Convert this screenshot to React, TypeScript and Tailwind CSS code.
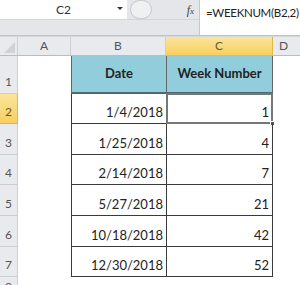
import React from 'react';

const rows = [
  { n: 2, date: '1/4/2018', week: 1, h: 'h-[30px]' },
  { n: 3, date: '1/25/2018', week: 4, h: 'h-[31px]' },
  { n: 4, date: '2/14/2018', week: 7, h: 'h-[30px]' },
  { n: 5, date: '5/27/2018', week: 21, h: 'h-[31px]' },
  { n: 6, date: '10/18/2018', week: 42, h: 'h-[31px]' },
  { n: 7, date: '12/30/2018', week: 52, h: 'h-[30px]' },
];

const font = { fontFamily: 'Lato, "Open Sans", sans-serif' };

const App: React.FC = () => {
  return (
    <div className="w-[300px] h-[285px] overflow-hidden bg-white text-[#222]" style={font}>
      {/* formula bar */}
      <div className="flex h-[35px] bg-[#e4e6e9]">
        <div className="flex flex-col w-[199px] shrink-0">
          <div className="flex h-[19px] items-center">
            <div className="relative w-[127px] h-[19px] bg-white flex items-center justify-center text-[12px] text-[#333]">
              C2
              <span className="absolute right-[4px] top-[7px] w-0 h-0 border-l-[3px] border-r-[3px] border-t-[3px] border-l-transparent border-r-transparent border-t-[#333]" />
            </div>
            <div className="ml-[3px] w-[22px] h-[19px] rounded-full border border-[#c4c8cd] bg-[#eef0f2]" />
            <div className="flex-1 flex justify-end pr-[5px]">
              <span className="italic text-[12px] text-[#444]" style={{ fontFamily: '"Liberation Serif", serif' }}>
                f<span className="text-[9px]">x</span>
              </span>
            </div>
          </div>
          <div className="flex-1 border-t border-[#d2d5d9]" />
        </div>
        <div className="flex-1 min-w-0 whitespace-nowrap bg-white border-l border-[#c4c8cd] pl-[6px] pt-[4px] text-[11.5px] tracking-[-0.3px] text-[#222]">
          =WEEKNUM(B2,2)
        </div>
      </div>
      <div className="h-[2px] bg-[#d4d7db] border-t border-[#c0c4c9]" />

      {/* column headers */}
      <div className="flex h-[19px] bg-[#e8eaed] border-b border-[#b7bcc2] text-[12px] text-[#555]">
        <div className="relative w-[18px] border-r border-[#cbcfd4]">
          <span className="absolute right-[2px] bottom-[2px] w-0 h-0" style={{ borderBottom: '11px solid #cfd2d6', borderLeft: '11px solid transparent' }} />
        </div>
        <div className="w-[53px] flex items-center justify-center border-r border-[#cbcfd4]">A</div>
        <div className="w-[95px] flex items-center justify-center border-r border-[#cbcfd4]">B</div>
        <div className="w-[107px] flex items-center justify-center border-r border-[#e0b848] bg-gradient-to-b from-[#fbe59a] to-[#f6cf5e] text-[#6b5a2a]">C</div>
        <div className="flex-1 flex items-center pl-[6px]">D</div>
      </div>

      {/* row 1 */}
      <div className="flex h-[38px]">
        <div className="w-[18px] bg-[#e8eaed] border-r border-b border-[#cbcfd4] flex items-end justify-center pb-[2px] text-[12px] text-[#555]">1</div>
        <div className="w-[53px]" />
        <div className="w-[95px] bg-[#92cddc] border-l border-[#666] border-b-2 border-b-[#4b6a71] flex items-center justify-center font-bold text-[13px]">Date</div>
        <div className="w-[107px] bg-[#92cddc] border-l border-r border-[#666] border-b-2 border-b-[#4b6a71] flex items-center justify-center font-bold text-[13px]">Week Number</div>
        <div className="flex-1" />
      </div>

      {rows.map((r) => (
        <div key={r.n} className={`flex ${r.h}`}>
          <div
            className={`w-[18px] border-r border-b flex items-end justify-center pb-[2px] text-[12px] ${
              r.n === 2
                ? 'bg-gradient-to-b from-[#fbe59a] to-[#f6cf5e] border-[#e0b848] text-[#6b5a2a]'
                : 'bg-[#e8eaed] border-[#cbcfd4] text-[#555]'
            }`}
          >
            {r.n}
          </div>
          <div className="w-[53px]" />
          <div className="w-[95px] border-l border-b border-[#3a3a3a] flex items-end justify-end pr-[3px] pb-[1px] text-[13px]">{r.date}</div>
          <div className="relative w-[107px] border-l border-r border-b border-[#3a3a3a] flex items-end justify-end pr-[3px] pb-[1px] text-[13px]">
            {r.week}
            {r.n === 2 && (
              <>
                <span className="absolute -inset-[1px] border-2 border-[#777]" />
                <span className="absolute -right-[3px] -bottom-[3px] w-[5px] h-[5px] bg-[#555] border border-white" />
              </>
            )}
          </div>
          <div className="flex-1" />
        </div>
      ))}

      {/* row 8 */}
      <div className="flex h-[20px]">
        <div className="w-[18px] bg-[#e8eaed] border-r border-[#cbcfd4] flex justify-center pt-[1px] text-[12px] text-[#555]">8</div>
      </div>
    </div>
  );
};

export default App;
